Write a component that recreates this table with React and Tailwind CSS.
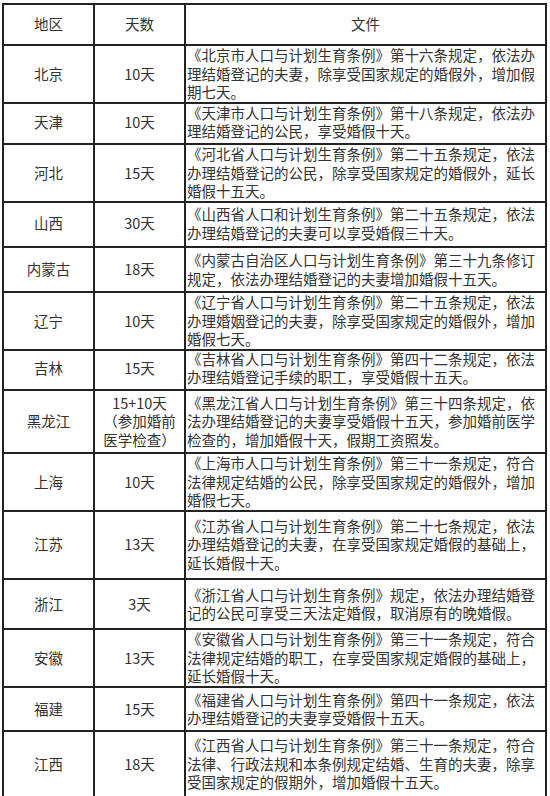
import React from "react";

const rows = [
  { region: "北京", days: ["10天"], h: "h-[55px]", text: ["《北京市人口与计划生育条例》第十六条规定，依法办", "理结婚登记的夫妻，除享受国家规定的婚假外，增加假", "期七天。"] },
  { region: "天津", days: ["10天"], h: "h-[44px]", text: ["《天津市人口与计划生育条例》第十八条规定，依法办", "理结婚登记的公民，享受婚假十天。"] },
  { region: "河北", days: ["15天"], h: "h-[56px]", text: ["《河北省人口与计划生育条例》第二十五条规定，依法", "办理结婚登记的公民，除享受国家规定的婚假外，延长", "婚假十五天。"] },
  { region: "山西", days: ["30天"], h: "h-[47px]", text: ["《山西省人口和计划生育条例》第二十五条规定，依法", "办理结婚登记的夫妻可以享受婚假三十天。"] },
  { region: "内蒙古", days: ["18天"], h: "h-[45px]", text: ["《内蒙古自治区人口与计划生育条例》第三十九条修订", "规定，依法办理结婚登记的夫妻增加婚假十五天。"] },
  { region: "辽宁", days: ["10天"], h: "h-[54px]", text: ["《辽宁省人口与计划生育条例》第二十五条规定，依法", "办理婚姻登记的夫妻，除享受国家规定的婚假外，增加", "婚假七天。"] },
  { region: "吉林", days: ["15天"], h: "h-[44px]", text: ["《吉林省人口与计划生育条例》第四十二条规定，依法", "办理结婚登记手续的职工，享受婚假十五天。"] },
  { region: "黑龙江", days: ["15+10天", "（参加婚前", "医学检查）"], h: "h-[63px]", text: ["《黑龙江省人口与计划生育条例》第三十四条规定，依", "法办理结婚登记的夫妻享受婚假十五天，参加婚前医学", "检查的，增加婚假十天，假期工资照发。"] },
  { region: "上海", days: ["10天"], h: "h-[57px]", text: ["《上海市人口与计划生育条例》第三十一条规定，符合", "法律规定结婚的公民，除享受国家规定的婚假外，增加", "婚假七天。"] },
  { region: "江苏", days: ["13天"], h: "h-[69px]", text: ["《江苏省人口与计划生育条例》第二十七条规定，依法", "办理结婚登记的夫妻，在享受国家规定婚假的基础上，", "延长婚假十天。"] },
  { region: "浙江", days: ["3天"], h: "h-[50px]", text: ["《浙江省人口与计划生育条例》规定，依法办理结婚登", "记的公民可享受三天法定婚假，取消原有的晚婚假。"] },
  { region: "安徽", days: ["13天"], h: "h-[58px]", text: ["《安徽省人口与计划生育条例》第三十一条规定，符合", "法律规定结婚的职工，在享受国家规定婚假的基础上，", "延长婚假十天。"] },
  { region: "福建", days: ["15天"], h: "h-[44px]", text: ["《福建省人口与计划生育条例》第四十一条规定，依法", "办理结婚登记的夫妻享受婚假十五天。"] },
  { region: "江西", days: ["18天"], h: "h-[66px]", text: ["《江西省人口与计划生育条例》第三十一条规定，符合", "法律、行政法规和本条例规定结婚、生育的夫妻，除享", "受国家规定的假期外，增加婚假十五天。"] },
];

const Lines = ({ lines }) =>
  lines.map((l, i) => (
    <React.Fragment key={i}>
      {i > 0 && <br />}
      {l}
    </React.Fragment>
  ));

export default function App() {
  return (
    <div className="w-[550px] h-[796px] overflow-hidden bg-white pt-[3px] pl-[2px] font-['Noto_Sans_CJK_SC',sans-serif] text-[14.5px] leading-[18.5px] text-[#333]">
      <div className="w-[545px] border-t-2 border-l-2 border-[#222]">
        <div className="grid grid-cols-[91px_91px_1fr] h-[41px]">
          <div className="flex items-center justify-center border-r-2 border-b-2 border-[#222]">地区</div>
          <div className="flex items-center justify-center border-r-2 border-b-2 border-[#222]">天数</div>
          <div className="flex items-center justify-center border-r-2 border-b-2 border-[#222]">文件</div>
        </div>
        {rows.map((r) => (
          <div key={r.region} className={`grid grid-cols-[91px_91px_1fr] ${r.h}`}>
            <div className="flex items-center justify-center border-r-2 border-b-2 border-[#222]">{r.region}</div>
            <div className="flex items-center justify-center text-center border-r-2 border-b-2 border-[#222]">
              <div><Lines lines={r.days} /></div>
            </div>
            <div className="flex items-center pl-[1px] border-r-2 border-b-2 border-[#222] whitespace-nowrap">
              <div><Lines lines={r.text} /></div>
            </div>
          </div>
        ))}
      </div>
    </div>
  );
}
